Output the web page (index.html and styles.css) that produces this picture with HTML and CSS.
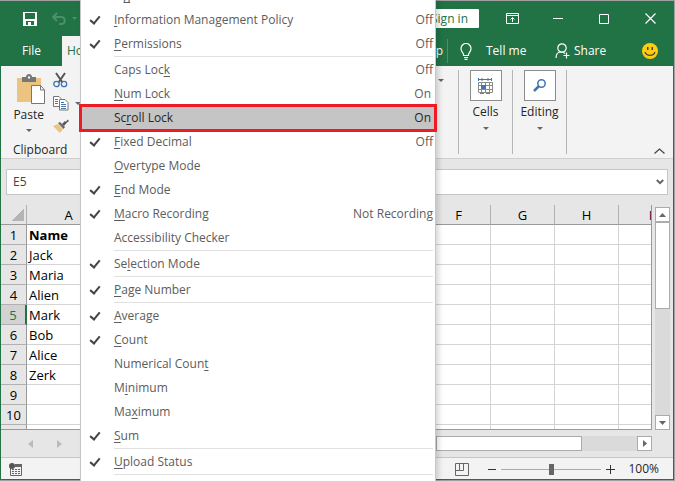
FILE: index.html
```html
<!DOCTYPE html>
<html lang="en">
  <head>
    <meta charset="UTF-8">
    <meta name="viewport" content="width=device-width, initial-scale=1.0">
    <title>Excel status bar menu</title>
    <link rel="stylesheet" href="styles.css">
  </head>
  <body>
    <div class="window">
      <header class="title-bar">
        <div class="quick-access">
          <button class="icon-button" aria-label="Save">
            <svg width="14" height="14" viewBox="0 0 14 14"><path d="M0 0h14v14H0zM2 1v6h10V1zM3 9v4h2v-3h3v3h3V9z" fill="#fff" fill-rule="evenodd"/></svg>
          </button>
          <button class="icon-button" aria-label="Undo">
            <svg width="26" height="14" viewBox="0 0 26 14"><path d="M5 1L1 5l4 4M1 5h8c5 0 5 7 0 7H7" fill="none" stroke="#4d8f6b" stroke-width="2"/><path d="M20 5h5l-2.500 3z" fill="#4d8f6b"/></svg>
          </button>
        </div>
        <div class="window-controls">
          <button class="sign-in">Sign in</button>
          <button class="control" aria-label="Ribbon display options">
            <svg width="13" height="11" viewBox="0 0 13 11"><path d="M.5.500h12v10H.5zM.5 2.500h12M6.500 9V4.500M4.500 6.500l2-2 2 2" fill="none" stroke="#fff"/></svg>
          </button>
          <button class="control" aria-label="Minimize">
            <svg width="11" height="11" viewBox="0 0 11 11"><path d="M0 5.500h10" stroke="#fff"/></svg>
          </button>
          <button class="control" aria-label="Maximize">
            <svg width="10" height="10" viewBox="0 0 10 10"><path d="M.5.500h9v9h-9z" fill="none" stroke="#fff"/></svg>
          </button>
          <button class="control" aria-label="Close">
            <svg width="11" height="11" viewBox="0 0 11 11"><path d="M.5.500l10 10M10.500.500l-10 10" stroke="#fff" stroke-width="1.200"/></svg>
          </button>
        </div>
      </header>

      <nav class="tabs">
        <button class="tab file">File</button>
        <button class="tab active">Home</button>
        <button class="tab help">Help</button>
        <button class="tell-me">
          <svg width="12" height="17" viewBox="0 0 12 17"><path d="M3.500 12.500V11C3 9.500 1 8.500 1 5.500a5 5 0 0 1 10 0c0 3-2 4-2.500 5.500v1.500zM4 14.500h4M4.500 16.300h3" fill="none" stroke="#fff" stroke-width="1.200"/></svg>
          Tell me
        </button>
        <button class="share">
          <svg width="15" height="16" viewBox="0 0 15 16"><path d="M1 15c0-4 2-6 5-6 1.500 0 3 .5 4 1.500M11.500 9.500v6M8.500 12.500h6" fill="none" stroke="#fff" stroke-width="1.200"/><circle cx="7" cy="5" r="4.200" fill="none" stroke="#fff" stroke-width="1.200"/></svg>
          Share
        </button>
        <button class="icon-button" aria-label="Feedback">
          <svg width="16" height="16" viewBox="0 0 16 16"><circle cx="8" cy="8" r="8" fill="#fc1"/><path d="M5 4h1.500v3H5zM9.500 4H11v3H9.500z" fill="#444"/><path d="M3 9c1.500 4.500 8.500 4.500 10 0" fill="none" stroke="#444" stroke-width="1.200"/></svg>
        </button>
      </nav>

      <section class="ribbon">
        <div class="clipboard">
          <div class="clipboard-tools">
            <button class="paste">
              <svg width="28" height="31" viewBox="0 0 28 31"><path d="M0 4h24v24H0z" fill="#ebc47f"/><path d="M5 3h4c0-4 6-4 6 0h4v5H5z" fill="#777"/><path d="M11 2.500h2v2h-2z" fill="#fff"/><path d="M14.500 11.500h9l4 4.500v13.500h-13z" fill="#fff" stroke="#777"/><path d="M23.500 11.500V16h4" fill="none" stroke="#777"/></svg>
              <span class="paste-label">Paste</span>
              <span class="arrow"></span>
            </button>
            <div class="small-tools">
              <button class="icon-button" aria-label="Cut">
                <svg width="15" height="16" viewBox="0 0 15 16"><path d="M3 1l6.500 9.500M12 1L5.500 10.500" stroke="#555" stroke-width="2"/><circle cx="3.500" cy="12" r="2.700" fill="none" stroke="#3f77b0" stroke-width="1.300"/><circle cx="11" cy="12" r="2.700" fill="none" stroke="#3f77b0" stroke-width="1.300"/></svg>
              </button>
              <button class="icon-button" aria-label="Copy">
                <svg width="16" height="15" viewBox="0 0 16 15"><path d="M.5.500H6l2 2v8H.5z" fill="#fff" stroke="#777"/><path d="M6.500 3.500H12l3 3v7.500H6.500z" fill="#fff" stroke="#777"/><path d="M2 3.500h3M2 5.500h3M2 7.500h3M8 6.500h3M8 8.500h5M8 10.500h5M8 12.500h5" stroke="#3f77b0"/></svg>
                <span class="arrow"></span>
              </button>
              <button class="icon-button" aria-label="Format painter">
                <svg width="16" height="14" viewBox="0 0 16 14"><path d="M0 7l5-2 5 5-3 4z" fill="#ebc47f"/><path d="M5 4l2-1 5 5-1.500 2z" fill="#666"/><path d="M9 5l3-3 1 1 1.500-2.500L16 2l-2.500 2-2.500 3z" fill="#555"/></svg>
              </button>
            </div>
          </div>
          <div class="group-label">Clipboard</div>
        </div>
        <div class="more"><span class="arrow"></span></div>
        <button class="group">
          <span class="tile">
            <svg width="15" height="16" viewBox="0 0 15 16"><path d="M.5 0v3M13.500 0v3M1 1.500h12M4.500 0L3 1.500 4.500 3M9.500 0L11 1.500 9.500 3" fill="none" stroke="#3f77b0"/><path d="M.5 4.500h14v10H.5zM.5 7.500h14M.5 11.500h14M3.500 4.500v10M7.500 4.500v10M11.500 4.500v10" fill="none" stroke="#8a8a8a"/><path d="M3 7h5v4H3z" fill="#3f77b0"/><path d="M2 15.500h4M8 15.500h4" stroke="#777"/></svg>
          </span>
          Cells
          <span class="arrow"></span>
        </button>
        <button class="group">
          <span class="tile">
            <svg width="13" height="13" viewBox="0 0 13 13"><circle cx="8.500" cy="4.500" r="3.700" fill="none" stroke="#3f77b0" stroke-width="1.500"/><path d="M6 7l-5 5" stroke="#3f77b0" stroke-width="2.500"/></svg>
          </span>
          Editing
          <span class="arrow"></span>
        </button>
        <div class="ribbon-end">
          <button class="icon-button" aria-label="Collapse ribbon">
            <svg width="11" height="6" viewBox="0 0 11 6"><path d="M.5 5.500l5-4.500 5 4.500" fill="none" stroke="#444" stroke-width="1.200"/></svg>
          </button>
        </div>
      </section>

      <div class="formula-row">
        <input class="name-box" type="text" value="E5" aria-label="Name box">
        <input class="formula" type="text" aria-label="Formula bar">
        <button class="icon-button" aria-label="Expand formula bar">
          <svg width="8" height="6" viewBox="0 0 8 6"><path d="M.8 1l3.200 3.200L7.200 1" fill="none" stroke="#666" stroke-width="2"/></svg>
        </button>
      </div>

      <main class="workspace">
        <div class="sheet">
          <table>
            <colgroup>
              <col class="col-index">
              <col class="col-name">
              <col class="col-wide" span="4">
              <col class="col-cell" span="4">
            </colgroup>
            <thead>
              <tr><th class="corner"></th><th>A</th><th>B</th><th>C</th><th>D</th><th>E</th><th>F</th><th>G</th><th>H</th><th class="accent">I</th></tr>
            </thead>
            <tbody>
              <tr><th>1</th><td class="bold">Name</td><td></td><td></td><td></td><td></td><td></td><td></td><td></td><td></td></tr>
              <tr><th>2</th><td>Jack</td><td></td><td></td><td></td><td></td><td></td><td></td><td></td><td></td></tr>
              <tr><th>3</th><td>Maria</td><td></td><td></td><td></td><td></td><td></td><td></td><td></td><td></td></tr>
              <tr><th>4</th><td>Alien</td><td></td><td></td><td></td><td></td><td></td><td></td><td></td><td></td></tr>
              <tr class="current"><th>5</th><td>Mark</td><td></td><td></td><td></td><td></td><td></td><td></td><td></td><td></td></tr>
              <tr><th>6</th><td>Bob</td><td></td><td></td><td></td><td></td><td></td><td></td><td></td><td></td></tr>
              <tr><th>7</th><td>Alice</td><td></td><td></td><td></td><td></td><td></td><td></td><td></td><td></td></tr>
              <tr><th>8</th><td>Zerk</td><td></td><td></td><td></td><td></td><td></td><td></td><td></td><td></td></tr>
              <tr><th>9</th><td></td><td></td><td></td><td></td><td></td><td></td><td></td><td></td><td></td></tr>
              <tr><th>10</th><td></td><td></td><td></td><td></td><td></td><td></td><td></td><td></td><td></td></tr>
              <tr><th></th><td></td><td></td><td></td><td></td><td></td><td></td><td></td><td></td><td></td></tr>
            </tbody>
          </table>
        </div>
        <div class="scroll-v">
          <button class="scroll-button" aria-label="Scroll up"><svg width="7" height="4" viewBox="0 0 7 4"><path d="M0 4l3.500-4L7 4z" fill="#666"/></svg></button>
          <div class="thumb"></div>
          <button class="scroll-button end" aria-label="Scroll down"><svg width="7" height="4" viewBox="0 0 7 4"><path d="M0 0l3.500 4L7 0z" fill="#666"/></svg></button>
        </div>
      </main>

      <div class="sheet-bar">
        <button class="icon-button" aria-label="Previous sheet"><svg width="5" height="8" viewBox="0 0 5 8"><path d="M5 0L0 4l5 4z" fill="#bbb"/></svg></button>
        <button class="icon-button" aria-label="Next sheet"><svg width="5" height="8" viewBox="0 0 5 8"><path d="M0 0l5 4-5 4z" fill="#bbb"/></svg></button>
        <div class="scroll-h">
          <div class="thumb"></div>
          <button class="scroll-button end" aria-label="Scroll right"><svg width="4" height="7" viewBox="0 0 4 7"><path d="M0 0l4 3.500L0 7z" fill="#666"/></svg></button>
        </div>
      </div>

      <footer class="status-bar">
        <button class="icon-button" aria-label="Record macro">
          <svg width="13" height="13" viewBox="0 0 13 13"><path d="M1.500 5v7.500h11v-10H6" fill="none" stroke="#666"/><path d="M6 1h7v3H6z" fill="#666"/><circle cx="3" cy="3" r="3" fill="#555"/><path d="M3 6.500h2M6 6.500h2M9 6.500h2M3 8.500h2M6 8.500h2M9 8.500h2M3 10.500h2M6 10.500h2M9 10.500h2" stroke="#666"/></svg>
        </button>
        <div class="zoom">
          <button class="icon-button page-view" aria-label="Page break preview">
            <svg width="14" height="13" viewBox="0 0 14 13"><path d="M.5.500h13v12H.5zM.5 7.500h8v-7M4.500.500v7" fill="none" stroke="#666"/></svg>
          </button>
          <button class="icon-button" aria-label="Zoom out"><svg width="8" height="9" viewBox="0 0 8 9"><path d="M0 4.500h8" stroke="#333"/></svg></button>
          <input type="range" min="0" max="100" value="50" aria-label="Zoom">
          <button class="icon-button" aria-label="Zoom in"><svg width="9" height="9" viewBox="0 0 9 9"><path d="M0 4.500h9M4.500 0v9" stroke="#333"/></svg></button>
          <button class="zoom-value">100%</button>
        </div>
      </footer>
    </div>

    <div class="menu" role="menu">
      <button class="item"><span class="mark"></span><span class="name">Si<u>g</u>natures</span></button>
      <button class="item checked"><span class="mark"></span><span class="name"><u>I</u>nformation Management Policy</span><span>Off</span></button>
      <button class="item checked"><span class="mark"></span><span class="name"><u>P</u>ermissions</span><span>Off</span></button>
      <hr>
      <button class="item"><span class="mark"></span><span class="name">Caps Loc<u>k</u></span><span>Off</span></button>
      <button class="item"><span class="mark"></span><span class="name"><u>N</u>um Lock</span><span class="on">On</span></button>
      <button class="item selected"><span class="mark"></span><span class="name">Sc<u>r</u>oll Lock</span><span class="on">On</span></button>
      <button class="item checked"><span class="mark"></span><span class="name"><u>F</u>ixed Decimal</span><span>Off</span></button>
      <button class="item"><span class="mark"></span><span class="name"><u>O</u>vertype Mode</span></button>
      <button class="item checked"><span class="mark"></span><span class="name"><u>E</u>nd Mode</span></button>
      <button class="item checked"><span class="mark"></span><span class="name"><u>M</u>acro Recording</span><span>Not Recording</span></button>
      <button class="item"><span class="mark"></span><span class="name">Accessibility Checker</span></button>
      <hr>
      <button class="item checked"><span class="mark"></span><span class="name">Se<u>l</u>ection Mode</span></button>
      <hr>
      <button class="item checked"><span class="mark"></span><span class="name"><u>P</u>age Number</span></button>
      <hr>
      <button class="item checked"><span class="mark"></span><span class="name"><u>A</u>verage</span></button>
      <button class="item checked"><span class="mark"></span><span class="name"><u>C</u>ount</span></button>
      <button class="item"><span class="mark"></span><span class="name">Numerical Coun<u>t</u></span></button>
      <button class="item"><span class="mark"></span><span class="name">M<u>i</u>nimum</span></button>
      <button class="item"><span class="mark"></span><span class="name">Ma<u>x</u>imum</span></button>
      <button class="item checked"><span class="mark"></span><span class="name"><u>S</u>um</span></button>
      <hr>
      <button class="item checked"><span class="mark"></span><span class="name"><u>U</u>pload Status</span></button>
      <hr>
    </div>
  </body>
</html>
```

FILE: styles.css
```css
* {
  box-sizing: border-box;
}

body {
  margin: 0;
  height: 100vh;
  padding: 1px 1px 1px 0;
  background-color: #a0a0a0;
  font-family: "Open Sans", "Noto Sans", sans-serif;
  font-size: 12px;
  line-height: 16px;
  color: #262626;
  position: relative;
  overflow: hidden;
}

button, input {
  font: inherit;
  color: inherit;
  border: none;
  background: none;
  padding: 0;
  margin: 0;
}

button {
  white-space: nowrap;
}

svg {
  display: block;
  flex: none;
}

.window {
  height: 100%;
  display: flex;
  flex-direction: column;
  border: 1px solid #217346;
  border-top: none;
  background-color: #e6e6e6;
}

/* title bar and tabs */
.title-bar {
  flex: none;
  display: flex;
  justify-content: space-between;
  height: 35px;
  background-color: #217346;
  color: #fff;
}

.quick-access {
  display: flex;
  align-items: center;
  gap: 15px;
  padding-left: 22px;
}

.window-controls {
  display: flex;
  align-items: center;
}

.sign-in {
  height: 19px;
  padding: 0 11px;
  margin-right: 10px;
  border-radius: 1px;
  background-color: #fff;
  color: #217346;
}

.control {
  width: 46px;
  height: 32px;
  display: flex;
  align-items: center;
  justify-content: center;
}

.tabs {
  flex: none;
  display: flex;
  align-items: center;
  height: 30px;
  padding-right: 15px;
  background-color: #217346;
  color: #fff;
}

.tab {
  height: 30px;
}

.file {
  width: 61px;
}

.active {
  padding: 0 5px;
  background-color: #f3f3f3;
  color: #217346;
}

.help {
  height: 24px;
  margin-left: auto;
  padding: 0 4px;
  border-right: 1px solid #4d8f6b;
}

.tell-me, .share {
  display: flex;
  align-items: center;
}

.tell-me {
  width: 107px;
  gap: 14px;
  padding-left: 12px;
}

.share {
  width: 87px;
  gap: 4px;
}

/* ribbon */
.ribbon {
  flex: none;
  display: flex;
  height: 93px;
  padding-top: 4px;
  background-color: #f3f3f3;
  border-bottom: 1px solid #cfcfcf;
}

.clipboard {
  width: 80px;
}

.clipboard-tools {
  display: flex;
  height: 72px;
}

.paste, .group {
  display: flex;
  flex-direction: column;
  align-items: center;
}

.paste {
  width: 45px;
  align-items: flex-end;
  padding-top: 4px;
  gap: 2px;
}

.paste-label {
  padding-right: 1px;
}

.arrow {
  border: 3px solid transparent;
  border-top-color: #666;
  border-bottom: none;
}

.paste .arrow, .group .arrow {
  margin-top: 4px;
}

.paste .arrow {
  margin-right: 13px;
}

.small-tools {
  display: flex;
  flex-direction: column;
  gap: 8px;
  padding: 2px 0 0 8px;
}

.small-tools .icon-button {
  display: flex;
  align-items: center;
  gap: 6px;
}

.group-label {
  padding-left: 12px;
}

.more {
  margin-left: auto;
  padding: 9px 14px 0 0;
}

.more .arrow {
  display: block;
}

.group {
  width: 54px;
  height: 84px;
  border-left: 1px solid #b5b5b5;
  gap: 3px;
}

.tile {
  width: 32px;
  height: 31px;
  display: flex;
  align-items: center;
  justify-content: center;
  background-color: #fff;
  border: 1px solid #8c8c8c;
}

.ribbon-end {
  width: 107px;
  height: 84px;
  display: flex;
  justify-content: flex-end;
  align-items: flex-end;
  padding-right: 8px;
  border-left: 1px solid #b5b5b5;
}

/* formula bar */
.formula-row {
  flex: none;
  display: flex;
  align-items: center;
  height: 26px;
  margin: 10px 5px 10px;
  padding-right: 3px;
  background-color: #fff;
  border: 1px solid #c6c6c6;
}

.name-box {
  width: 70px;
  padding-left: 6px;
  color: #444;
}

.formula {
  flex: 1;
  min-width: 0;
}

/* grid */
.workspace {
  flex: 1;
  min-height: 0;
  display: flex;
  gap: 3px;
  padding-right: 3px;
}

.sheet {
  flex: 1;
  min-width: 0;
  overflow: hidden;
  border-right: 1px solid #999;
  border-bottom: 1px solid #999;
}

table {
  width: 682px;
  table-layout: fixed;
  border-collapse: separate;
  border-spacing: 0;
  font-size: 13px;
  color: #000;
}

.col-index {
  width: 26px;
}

.col-name {
  width: 84px;
}

.col-wide {
  width: 79px;
}

.col-cell {
  width: 64px;
}

th, td {
  height: 20px;
  padding: 0;
  line-height: 18px;
  border-right: 1px solid #d4d4d4;
  border-bottom: 1px solid #d4d4d4;
}

td {
  padding-left: 2px;
  background-color: #fff;
}

th {
  font-weight: normal;
  background-color: #e6e6e6;
  border-color: #b1b1b1;
}

tbody th {
  border-right-color: #999;
}

thead th {
  border-bottom-color: #999;
}

.corner {
  background: linear-gradient(135deg, transparent 50%, #b4b4b4 50%) 11px 4px / 12px 12px no-repeat #e6e6e6;
}

.accent {
  color: #4d0026;
}

.bold {
  font-weight: bold;
}

.current th {
  color: #217346;
  background-color: #d2d2d2;
  border-right: 2px solid #217346;
}

/* scroll bars */
.scroll-v {
  width: 15px;
  margin-top: 2px;
  display: flex;
  flex-direction: column;
  background-color: #dadada;
}

.scroll-h {
  width: 216px;
  height: 15px;
  margin-left: auto;
  display: flex;
  background-color: #dadada;
}

.scroll-button {
  width: 15px;
  height: 15px;
  display: flex;
  align-items: center;
  justify-content: center;
  background-color: #fff;
  border: 1px solid #ababab;
}

.thumb {
  background-color: #fff;
  border: 1px solid #ababab;
}

.scroll-v .thumb {
  height: 87px;
}

.scroll-v .end {
  margin-top: auto;
}

.scroll-h .thumb {
  width: 146px;
}

.scroll-h .end {
  margin-left: auto;
}

.sheet-bar {
  flex: none;
  display: flex;
  align-items: center;
  gap: 24px;
  height: 27px;
  padding: 0 21px 0 27px;
}

/* status bar */
.status-bar {
  flex: none;
  display: flex;
  align-items: center;
  justify-content: space-between;
  height: 22px;
  padding: 1px 14px 0 8px;
  background-color: #f3f3f3;
  border-top: 1px solid #c6c6c6;
}

.zoom {
  display: flex;
  align-items: center;
  gap: 5px;
}

.page-view {
  margin-right: 14px;
}

.zoom-value {
  margin-left: 8px;
}

input[type="range"] {
  width: 100px;
  height: 12px;
  appearance: none;
  background: linear-gradient(#ababab, #ababab) center / 100% 1px no-repeat;
}

input[type="range"]::-webkit-slider-thumb {
  appearance: none;
  width: 5px;
  height: 11px;
  background-color: #666;
}

/* status bar menu */
.menu {
  position: absolute;
  top: -16px;
  bottom: 0;
  left: 80px;
  width: 356px;
  background-color: #fff;
  border: 1px solid #c6c6c6;
  border-top: none;
  border-bottom: none;
  box-shadow: 3px 0 5px rgba(0, 0, 0, 0.15);
  color: #5c5c5c;
}

.item {
  display: flex;
  align-items: center;
  width: 100%;
  height: 24px;
  padding-right: 2px;
}

.on {
  padding-right: 2px;
}

.mark {
  width: 33px;
}

.checked .mark::before {
  content: "";
  display: block;
  width: 8px;
  height: 4px;
  margin: 0 0 3px 9px;
  border: solid #444;
  border-width: 0 0 2px 2px;
  transform: rotate(-50deg);
}

.name {
  flex: 1;
  text-align: left;
}

.item u {
  text-underline-offset: 2px;
  text-decoration-skip-ink: none;
}

.selected {
  background-color: #c5c5c5;
  color: #262626;
  outline: 3px solid #ed1c24;
  outline-offset: -1px;
}

hr {
  height: 1px;
  margin: 0 2px 1px 33px;
  border: none;
  background-color: #e1e1e1;
}
```
